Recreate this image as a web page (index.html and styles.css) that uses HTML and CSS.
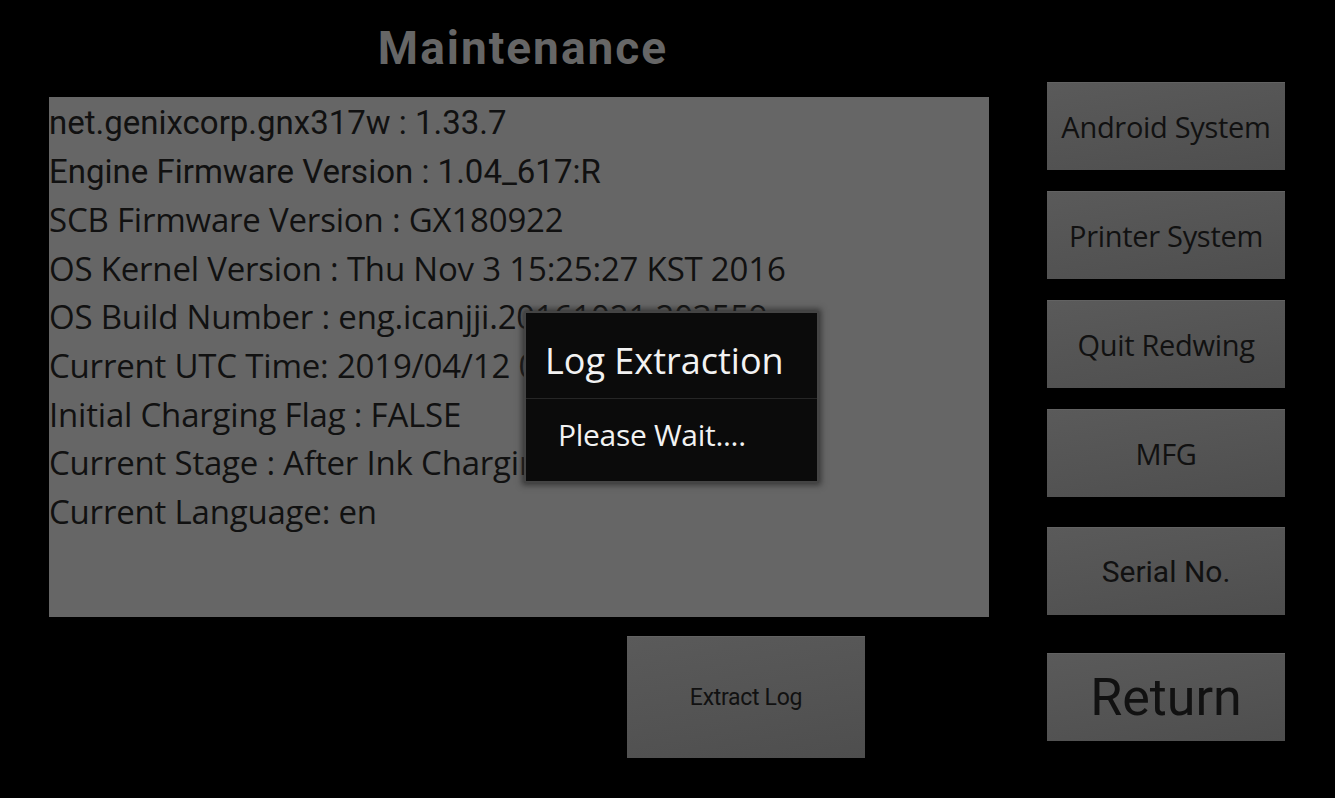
FILE: index.html
```html
<!DOCTYPE html>
<html>
<head>
<meta charset="utf-8">
<link rel="stylesheet" href="styles.css">
</head>
<body>
<div class="screen">
  <div class="left">
    <h1 class="title">Maintenance</h1>
    <div class="info">
      <div class="line roboto">net.genixcorp.gnx317w : 1.33.7</div>
      <div class="line roboto">Engine Firmware Version : 1.04_617:R</div>
      <div class="line">SCB Firmware Version : GX180922</div>
      <div class="line">OS Kernel Version : Thu Nov 3 15:25:27 KST 2016</div>
      <div class="line">OS Build Number : eng.icanjji.20161021.203559</div>
      <div class="line">Current UTC Time: 2019/04/12 08:02:46</div>
      <div class="line">Initial Charging Flag : FALSE</div>
      <div class="line">Current Stage : After Ink Charging</div>
      <div class="line">Current Language: en</div>
    </div>
    <div class="btn extract roboto">Extract Log</div>
  </div>
  <div class="right">
    <div class="btn side">Android System</div>
    <div class="btn side">Printer System</div>
    <div class="btn side">Quit Redwing</div>
    <div class="btn side">MFG</div>
    <div class="btn side serial roboto">Serial No.</div>
    <div class="btn side ret roboto">Return</div>
  </div>
  <div class="dialog">
    <div class="dlg-title">Log Extraction</div>
    <div class="dlg-body">Please Wait....</div>
  </div>
</div>
</body>
</html>
```
FILE: styles.css
```css
html, body {
  margin: 0;
  padding: 0;
  background: #000;
}
.screen {
  position: relative;
  width: 1335px;
  height: 798px;
  background: #000;
  display: flex;
  font-family: "Open Sans", "DejaVu Sans", sans-serif;
  color: #111;
  overflow: hidden;
}
.roboto {
  font-family: Roboto, "Liberation Sans", sans-serif;
}
.left {
  width: 940px;
  margin-left: 49px;
  display: flex;
  flex-direction: column;
}
.title {
  margin: 0;
  height: 97px;
  font-family: Roboto, "Liberation Sans", sans-serif;
  font-weight: 700;
  font-size: 46px;
  line-height: 97px;
  color: #666;
  text-align: center;
  letter-spacing: 2px;
  padding-left: 8px;
  box-sizing: border-box;
}
.info {
  height: 520px;
  background: #666;
  box-sizing: border-box;
  padding-top: 2px;
}
.line {
  height: 48.6px;
  line-height: 48.6px;
  font-size: 33px;
  white-space: nowrap;
  letter-spacing: -0.2px;
}
.line.roboto {
  letter-spacing: 0;
}
.btn {
  background: linear-gradient(170deg, #5a5a5a 0%, #535353 60%, #4e4e4e 100%);
  border-top: 1px solid #626262;
  box-sizing: border-box;
  display: flex;
  align-items: center;
  justify-content: center;
  color: #111;
  white-space: nowrap;
}
.extract {
  margin-top: 19px;
  margin-left: 578px;
  width: 238px;
  height: 122px;
  font-size: 23px;
  letter-spacing: -0.3px;
}
.right {
  margin-left: 58px;
  width: 238px;
  display: flex;
  flex-direction: column;
  padding-top: 82px;
}
.side {
  height: 88px;
  margin-bottom: 21px;
  font-size: 29px;
  letter-spacing: -0.3px;
}
.side:nth-child(4) {
  margin-bottom: 30px;
}
.serial {
  margin-bottom: 38px;
  font-size: 30px;
  letter-spacing: 0;
}
.ret {
  font-size: 52px;
  letter-spacing: 0;
}
.dialog {
  position: absolute;
  left: 524px;
  top: 311px;
  width: 295px;
  height: 172px;
  box-sizing: border-box;
  background: #0b0b0b;
  border: 2px solid #444;
  box-shadow: 0 0 6px 2px rgba(40,40,40,0.8);
  color: #f2f2f2;
}
.dlg-title {
  height: 86px;
  line-height: 96px;
  padding-left: 19px;
  font-size: 36px;
  border-bottom: 1px solid #262626;
  box-sizing: border-box;
}
.dlg-body {
  padding-left: 32px;
  line-height: 72px;
  font-size: 30px;
  letter-spacing: -0.3px;
}
```
